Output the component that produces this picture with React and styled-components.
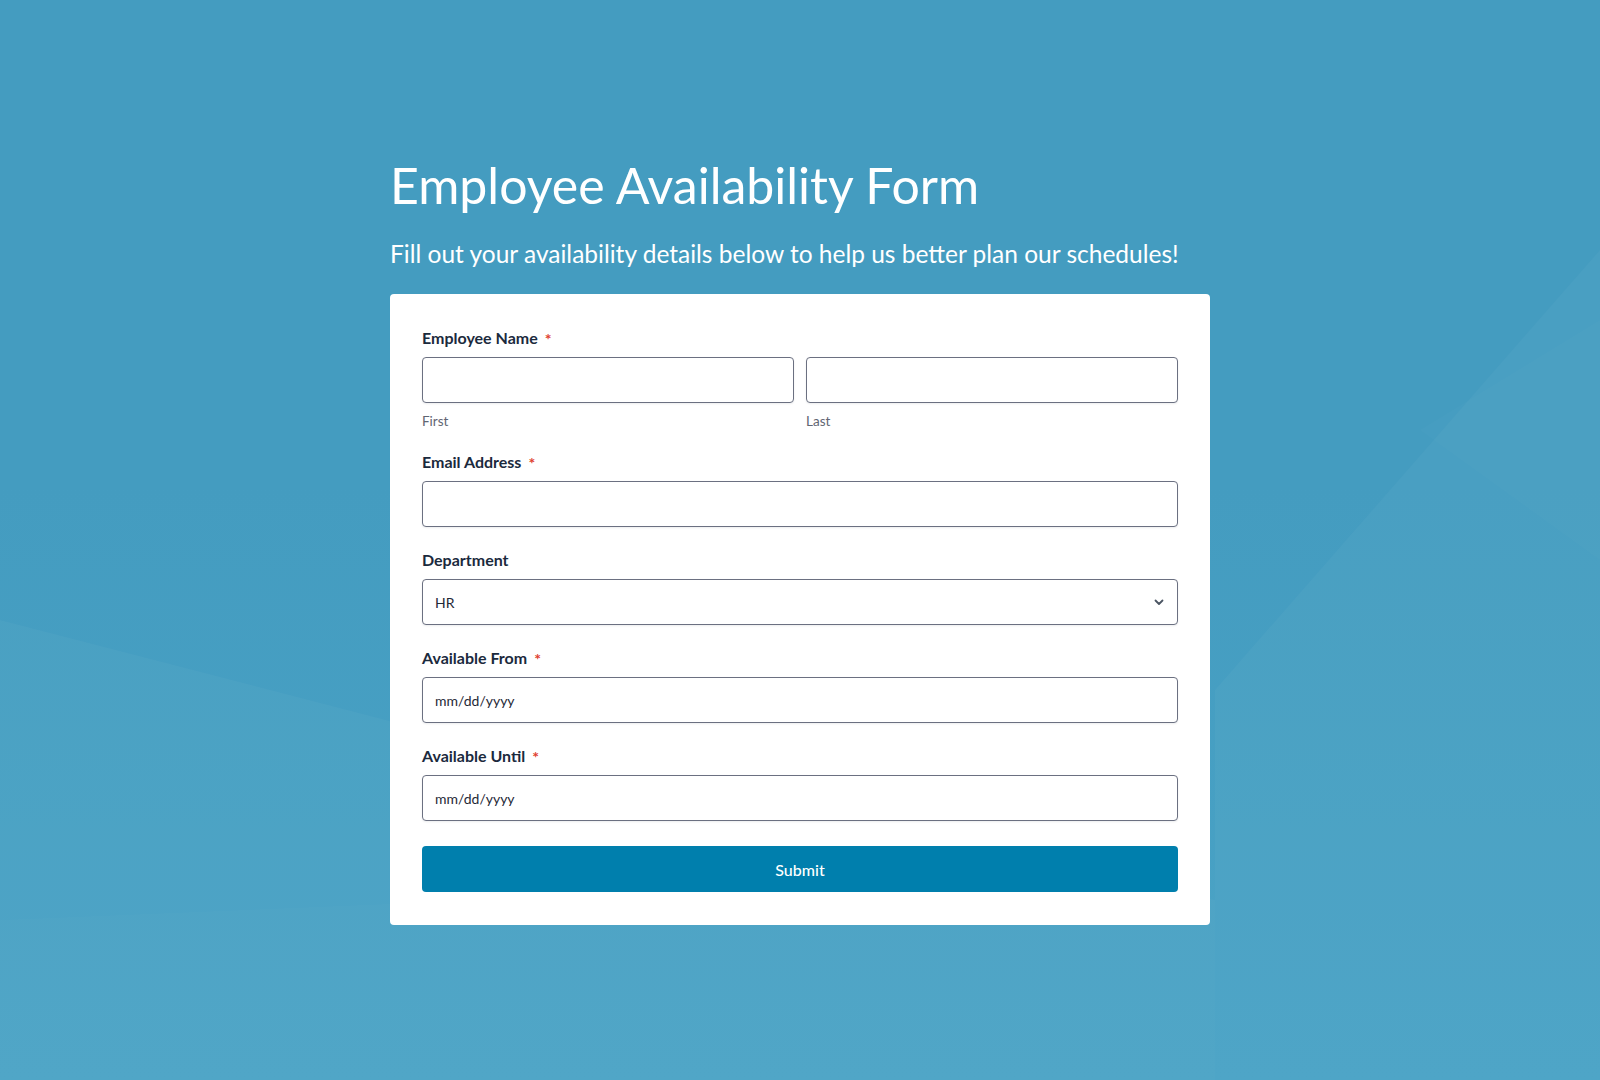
import styled, { createGlobalStyle } from "styled-components";

const GlobalStyle = createGlobalStyle`
  * { box-sizing: border-box; }
  html, body { margin: 0; padding: 0; }
  body {
    font-family: Lato, "Noto Sans", sans-serif;
    background: #449cc0;
  }
`;

const Page = styled.div`
  position: relative;
  min-height: 1080px;
  overflow: hidden;
  background: linear-gradient(180deg, #449cc0 0%, #449cc0 45%, #49a3c6 100%);
`;

const Backdrop = styled.svg`
  position: absolute;
  inset: 0;
  width: 100%;
  height: 100%;
  pointer-events: none;
`;

const Content = styled.main`
  position: relative;
  width: 820px;
  margin: 0 auto;
  padding-top: 154px;
  display: flex;
  flex-direction: column;
`;

const Title = styled.h1`
  margin: 0;
  color: #fff;
  font-family: Lato, "Noto Sans", sans-serif;
  font-weight: 400;
  font-size: 50px;
  line-height: 62px;
`;

const Subtitle = styled.p`
  margin: 22px 0 0;
  color: #fff;
  font-family: Lato, "Noto Sans", sans-serif;
  font-weight: 400;
  font-size: 24.5px;
  line-height: 32px;
`;

const Card = styled.form`
  margin-top: 24px;
  background: #fff;
  border-radius: 4px;
  padding: 32px 32px 33px;
  display: flex;
  flex-direction: column;
`;

const Field = styled.div`
  display: flex;
  flex-direction: column;
  margin-bottom: ${(p) => p.$gap || 21}px;
`;

const Label = styled.label`
  display: flex;
  align-items: center;
  gap: 7px;
  height: 22px;
  margin-bottom: 9px;
  color: #1b2a3d;
  font-size: 16px;
  font-weight: 700;
`;

const Required = styled.span`
  color: #e0412f;
  font-size: 16px;
  font-weight: 700;
  transform: translateY(1px);
`;

const Row = styled.div`
  display: grid;
  grid-template-columns: 1fr 1fr;
  column-gap: 12px;
`;

const Column = styled.div`
  display: flex;
  flex-direction: column;
`;

const SubLabel = styled.span`
  margin-top: 9px;
  height: 18px;
  color: #5f6673;
  font-size: 13.5px;
  line-height: 18px;
`;

const Input = styled.input`
  width: 100%;
  height: 46px;
  border: 1px solid #6b7081;
  border-radius: 4px;
  padding: 0 12px;
  background: #fff;
  color: #1f2937;
  font-family: Lato, "Noto Sans", sans-serif;
  font-size: 14px;
  box-shadow: 0 1px 2px rgba(15, 23, 42, 0.08);
  outline: none;

  &::placeholder {
    color: #1f2937;
    opacity: 1;
  }
`;

const SelectWrap = styled.div`
  position: relative;
`;

const Select = styled.select`
  width: 100%;
  height: 46px;
  appearance: none;
  border: 1px solid #6b7081;
  border-radius: 4px;
  padding: 0 36px 0 12px;
  background: #fff;
  color: #1f2937;
  font-family: Lato, "Noto Sans", sans-serif;
  font-size: 14px;
  box-shadow: 0 1px 2px rgba(15, 23, 42, 0.08);
  outline: none;
`;

const Chevron = styled.svg`
  position: absolute;
  right: 13px;
  top: 50%;
  width: 12px;
  height: 12px;
  transform: translateY(-50%);
  pointer-events: none;
`;

const SubmitButton = styled.button`
  margin-top: 4px;
  height: 46px;
  border: none;
  border-radius: 4px;
  background: #007fad;
  color: #fff;
  font-family: Lato, "Noto Sans", sans-serif;
  font-size: 16px;
  font-weight: 500;
  cursor: pointer;
`;

const FieldLabel = ({ children, required }) => (
  <Label>
    {children}
    {required && <Required>*</Required>}
  </Label>
);

const App = () => {
  return (
    <>
      <GlobalStyle />
      <Page>
        <Backdrop viewBox="0 0 1600 1080" preserveAspectRatio="none">
          <polygon points="0,620 795,826 1215,900 1215,1080 0,1080" fill="#ffffff" opacity="0.03" />
          <polygon points="0,920 1215,870 1215,1080 0,1080" fill="#ffffff" opacity="0.015" />
          <polygon points="1215,690 1600,250 1600,1080 1215,1080" fill="#ffffff" opacity="0.03" />
          <polygon points="1420,430 1600,560 1600,320" fill="#ffffff" opacity="0.015" />
        </Backdrop>
        <Content>
          <Title>Employee Availability Form</Title>
          <Subtitle>Fill out your availability details below to help us better plan our schedules!</Subtitle>
          <Card onSubmit={(e) => e.preventDefault()}>
            <Field $gap={20}>
              <FieldLabel required>Employee Name</FieldLabel>
              <Row>
                <Column>
                  <Input type="text" />
                  <SubLabel>First</SubLabel>
                </Column>
                <Column>
                  <Input type="text" />
                  <SubLabel>Last</SubLabel>
                </Column>
              </Row>
            </Field>
            <Field>
              <FieldLabel required>Email Address</FieldLabel>
              <Input type="email" />
            </Field>
            <Field>
              <FieldLabel>Department</FieldLabel>
              <SelectWrap>
                <Select defaultValue="HR">
                  <option>HR</option>
                  <option>Finance</option>
                  <option>Engineering</option>
                  <option>Sales</option>
                </Select>
                <Chevron viewBox="0 0 12 12">
                  <path d="M2.5 4.5 L6 8 L9.5 4.5" fill="none" stroke="#4b5563" strokeWidth="1.8" strokeLinecap="round" strokeLinejoin="round" />
                </Chevron>
              </SelectWrap>
            </Field>
            <Field>
              <FieldLabel required>Available From</FieldLabel>
              <Input type="text" placeholder="mm/dd/yyyy" />
            </Field>
            <Field>
              <FieldLabel required>Available Until</FieldLabel>
              <Input type="text" placeholder="mm/dd/yyyy" />
            </Field>
            <SubmitButton type="submit">Submit</SubmitButton>
          </Card>
        </Content>
      </Page>
    </>
  );
};

export default App;
